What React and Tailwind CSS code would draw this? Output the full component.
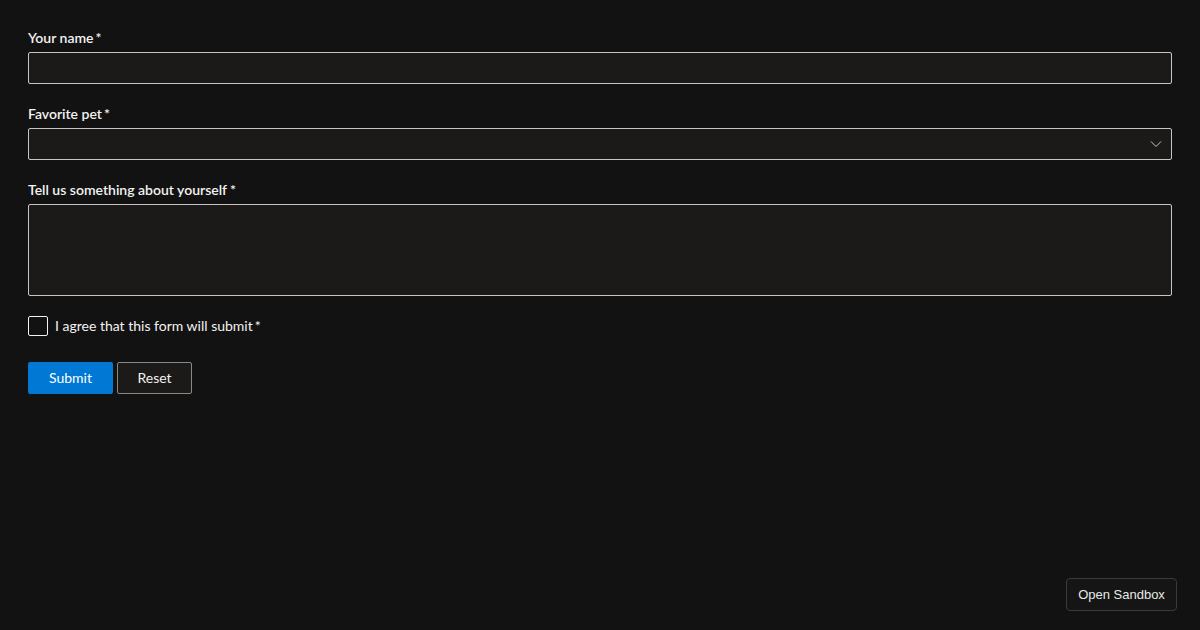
export default function App() {
  const font = { fontFamily: 'Lato, "Noto Sans", sans-serif' };

  return (
    <div
      className="relative min-h-screen h-[630px] w-full bg-[#121212] text-[#f3f2f1] px-[28px] pt-[28px]"
      style={font}
    >
      <form className="flex flex-col" onSubmit={(e) => e.preventDefault()}>
        {/* Name */}
        <label className="text-[14px] leading-[20px] font-semibold">
          Your name<span className="ml-[2px]">*</span>
        </label>
        <input
          type="text"
          className="mt-[4px] h-[32px] w-full rounded-[2px] border border-[#c8c6c4] bg-[#1b1a19] px-2 text-[14px] outline-none"
        />

        {/* Pet */}
        <label className="mt-[20px] text-[14px] leading-[20px] font-semibold">
          Favorite pet<span className="ml-[2px]">*</span>
        </label>
        <div className="mt-[4px] flex h-[32px] w-full items-center justify-end rounded-[2px] border border-[#c8c6c4] bg-[#1b1a19] pr-[9px]">
          <svg width="12" height="12" viewBox="0 0 12 12" fill="none" stroke="#c8c6c4" strokeWidth="1">
            <path d="M1 3.5l5 5 5-5" />
          </svg>
        </div>

        {/* About */}
        <label className="mt-[20px] text-[14px] leading-[20px] font-semibold">
          Tell us something about yourself<span className="ml-[3px]">*</span>
        </label>
        <textarea className="mt-[4px] h-[92px] w-full resize-none rounded-[2px] border border-[#c8c6c4] bg-[#1b1a19] px-2 py-1 text-[14px] outline-none" />

        {/* Agree */}
        <label className="mt-[20px] flex items-center gap-[7px] text-[14px] leading-[20px]">
          <span className="h-[20px] w-[20px] rounded-[2px] border border-[#f3f2f1]" />
          <span>
            I agree that this form will submit<span className="ml-[2px]">*</span>
          </span>
        </label>

        {/* Buttons */}
        <div className="mt-[26px] flex gap-[4px]">
          <button
            type="submit"
            className="h-[32px] w-[85px] rounded-[2px] bg-[#0078d4] pb-[2px] text-[14px] text-white"
          >
            Submit
          </button>
          <button
            type="button"
            className="h-[32px] w-[75px] rounded-[2px] border border-[#8a8886] bg-[#1b1a19] pb-[2px] text-[14px] text-[#f3f2f1]"
          >
            Reset
          </button>
        </div>
      </form>

      <button
        className="absolute bottom-[19px] right-[23px] h-[33px] w-[111px] rounded-[4px] border border-[#3a3a3a] bg-[#151515] text-[13px] text-[#e8e8e8]"
        style={{ fontFamily: '"Liberation Sans", Arial, sans-serif' }}
      >
        Open Sandbox
      </button>
    </div>
  );
}
